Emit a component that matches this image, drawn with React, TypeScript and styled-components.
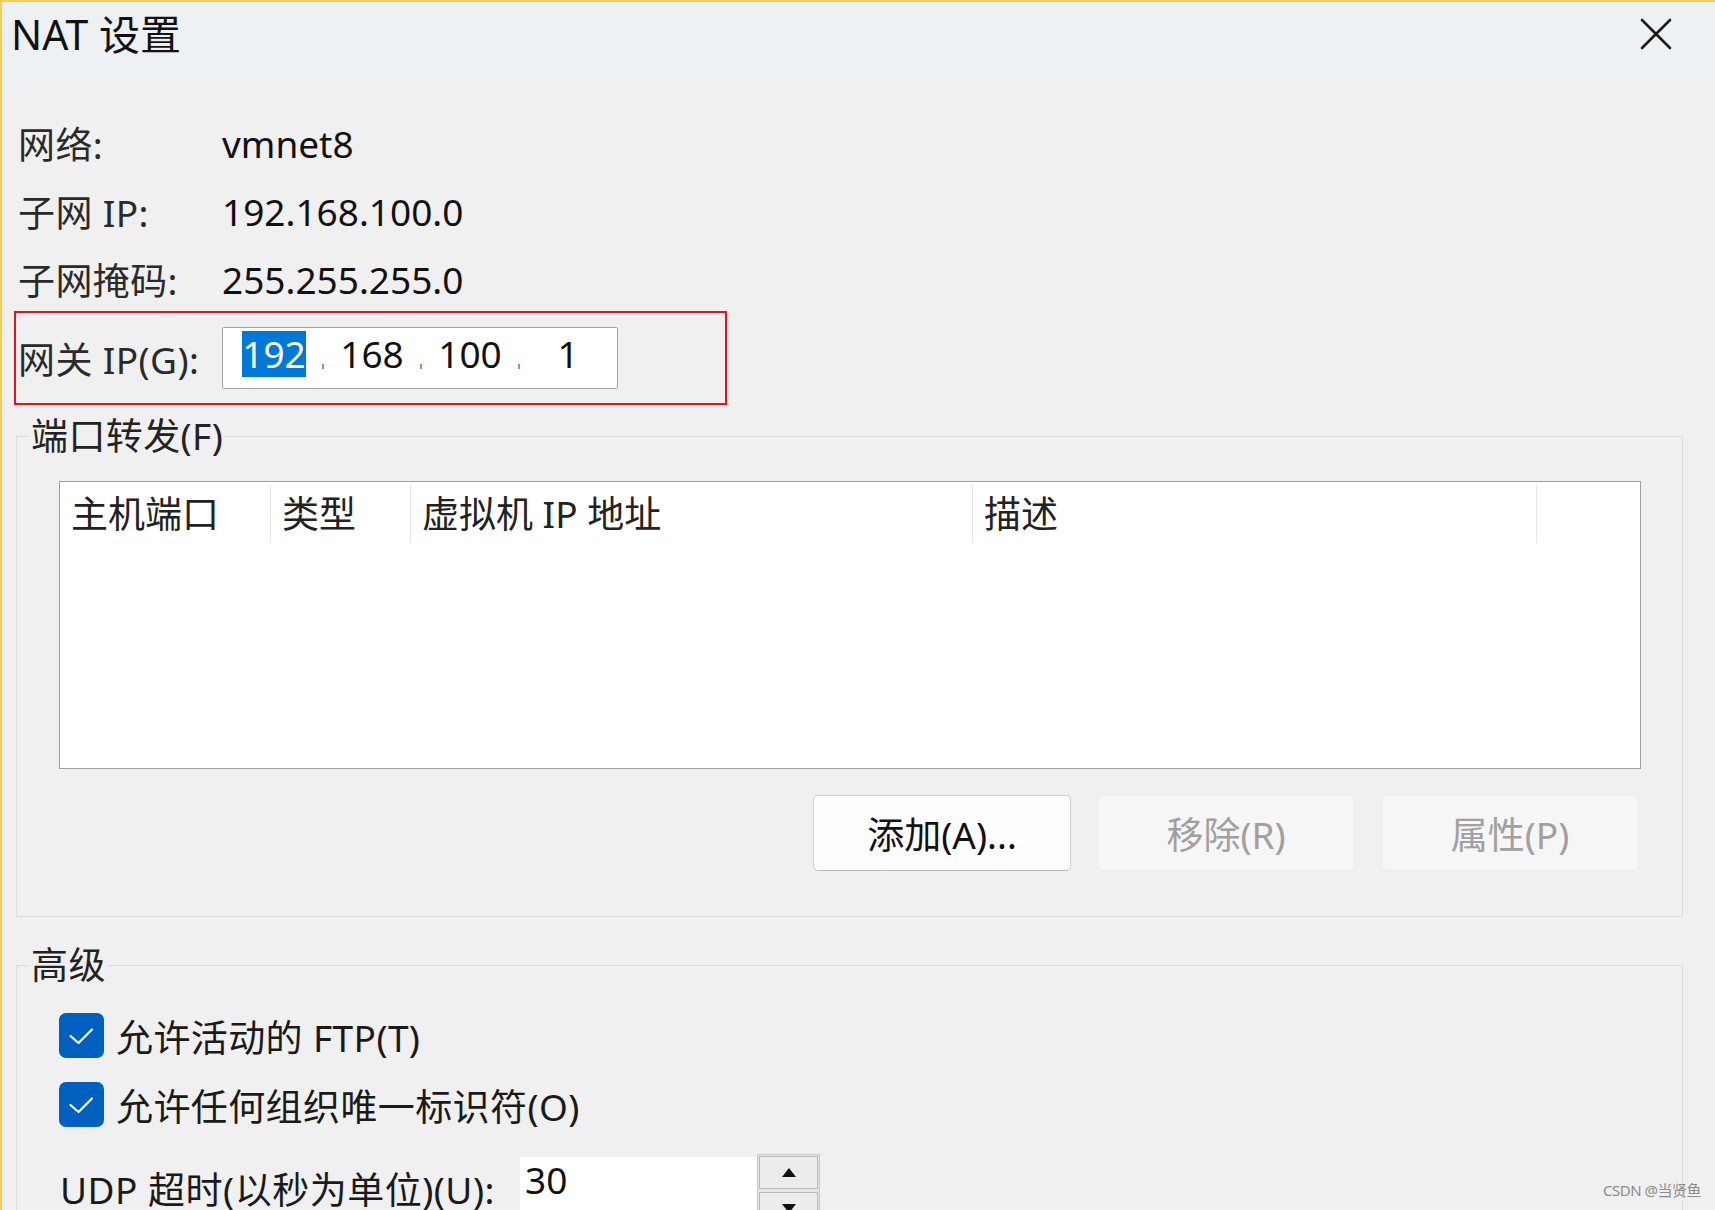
import React from "react";
import styled, { createGlobalStyle } from "styled-components";

const Global = createGlobalStyle`
  html, body { margin: 0; padding: 0; background: #f0f0f0; }
  body { font-family: "Noto Sans", "Noto Sans CJK SC", sans-serif; color: #1a1a1a; }
  * { box-sizing: border-box; }
`;

const Dialog = styled.div`
  position: relative;
  width: 1715px;
  height: 1210px;
  overflow: hidden;
  background: #f0f0f0;
  border-top: 2px solid #f8cd55;
  border-left: 2px solid #f8cd55;
`;

const TitleBar = styled.div`
  height: 83px;
  display: flex;
  align-items: flex-start;
  justify-content: space-between;
  padding: 9px 43px 0 9px;
  background: #eef1f3;
`;

const Title = styled.div`
  font-size: 41px;
  line-height: 46px;
  color: #111;
`;

const CloseBtn = styled.div`
  margin-top: 7px;
  width: 32px;
  height: 32px;
  display: flex;
`;

const Body = styled.div`
  padding: 24px 0 0 16px;
  font-size: 37px;
`;

const InfoRow = styled.div`
  display: grid;
  grid-template-columns: 204px auto;
  align-items: center;
  height: 68px;
`;

const Label = styled.div`
  color: #2a2a2a;
  letter-spacing: 0.4px;
`;

const Value = styled.div`
  color: #111;
`;

const Highlight = styled.div`
  margin: -2px 0 0 -4px;
  width: 713px;
  height: 94px;
  border: 2px solid #e8101a;
  padding-left: 2px;
  display: grid;
  grid-template-columns: 204px auto;
  align-items: center;
`;

const IpBox = styled.div`
  width: 396px;
  height: 62px;
  border: 1px solid #a5a5a5;
  border-radius: 2px;
  background: #fff;
  display: flex;
  align-items: flex-start;
  padding: 3px 0 0 12px;
`;

const Octet = styled.div`
  width: 78px;
  text-align: center;
  line-height: 46px;
  color: #111;
`;

const Selected = styled.span`
  display: inline-block;
  background: #0078d7;
  color: #fff;
  line-height: 46px;
`;

const Dot = styled.span`
  width: 2px;
  height: 5px;
  margin: 33px 9px 0;
  background: #c98c4e;
`;

const Group = styled.fieldset<{ $gap: number }>`
  margin: ${(p) => p.$gap}px 0 0 -2px;
  width: 1667px;
  border: 1px solid #dcdcdc;
  padding: 0;
  min-width: 0;
`;

const Legend = styled.legend`
  margin-left: 12px;
  padding: 0 2px;
  font-size: 37px;
  line-height: 50px;
  color: #222;
  letter-spacing: 0.4px;
`;

const GroupInner = styled.div`
  padding: 20px 41px 45px 42px;
`;

const ListView = styled.div`
  width: 1582px;
  height: 288px;
  border: 1px solid #a0a0a0;
  background: #fff;
`;

const ListHeader = styled.div`
  display: grid;
  grid-template-columns: 211px 140px 562px 564px 1fr;
  padding-top: 3px;
`;

const HeaderCell = styled.div<{ $last?: boolean }>`
  height: 58px;
  line-height: 58px;
  padding-left: 11px;
  border-right: ${(p) => (p.$last ? "none" : "1px solid #e6e6e6")};
  color: #222;
  white-space: nowrap;
`;

const ButtonRow = styled.div`
  display: flex;
  justify-content: flex-end;
  gap: 26px;
  margin: 26px 2px 0 0;
`;

const Button = styled.div<{ $disabled?: boolean }>`
  width: 258px;
  height: 76px;
  display: flex;
  align-items: center;
  justify-content: center;
  border-radius: 5px;
  font-size: 37px;
  background: ${(p) => (p.$disabled ? "#f6f6f6" : "#fdfdfd")};
  border: 1px solid ${(p) => (p.$disabled ? "#ececec" : "#d2d2d2")};
  border-bottom-color: ${(p) => (p.$disabled ? "#ececec" : "#bdbdbd")};
  color: ${(p) => (p.$disabled ? "#a0a0a0" : "#111")};
`;

const AdvInner = styled.div`
  padding: 11px 0 80px 0;
`;

const CheckRow = styled.div`
  display: flex;
  align-items: center;
  gap: 12px;
  height: 69px;
  padding-left: 42px;
  letter-spacing: 0.4px;
`;

const CheckBox = styled.div`
  width: 45px;
  height: 45px;
  border-radius: 7px;
  background: #0060c0;
  display: flex;
  align-items: center;
  justify-content: center;
`;

const UdpRow = styled.div`
  display: flex;
  align-items: flex-start;
  margin-top: 18px;
  padding-left: 43px;
`;

const UdpLabel = styled.div`
  width: 460px;
  margin-top: 8px;
  line-height: 50px;
  white-space: nowrap;
  letter-spacing: 0.5px;
`;

const NumInput = styled.div`
  width: 237px;
  height: 62px;
  background: #fff;
  padding-left: 5px;
  line-height: 46px;
  color: #111;
`;

const Spinner = styled.div`
  margin-top: -3px;
  width: 63px;
  padding: 1px;
  border: 1px solid #c9c9c9;
  display: flex;
  flex-direction: column;
  gap: 3px;
  background: #e4e4e4;
`;

const SpinBtn = styled.div`
  height: 33px;
  border: 1px solid #b9b9b9;
  background: #ececec;
  display: flex;
  align-items: center;
  justify-content: center;
`;

const Watermark = styled.div`
  position: absolute;
  right: 14px;
  bottom: 10px;
  font-size: 15px;
  color: #8c8c8c;
  letter-spacing: -0.5px;
`;

const Check = () => (
  <svg width="45" height="45" viewBox="0 0 45 45">
    <path d="M11.5 23 L19.5 30 L33 16.5" fill="none" stroke="#fff" strokeWidth="2.2" strokeLinecap="round" strokeLinejoin="round" />
  </svg>
);

export default function App() {
  return (
    <>
      <Global />
      <Dialog>
        <TitleBar>
          <Title>NAT 设置</Title>
          <CloseBtn>
            <svg width="32" height="32" viewBox="0 0 32 32">
              <path d="M2 2 L30 30 M30 2 L2 30" stroke="#1a1a1a" strokeWidth="2.6" strokeLinecap="round" />
            </svg>
          </CloseBtn>
        </TitleBar>
        <Body>
          <InfoRow>
            <Label>网络:</Label>
            <Value>vmnet8</Value>
          </InfoRow>
          <InfoRow>
            <Label>子网 IP:</Label>
            <Value>192.168.100.0</Value>
          </InfoRow>
          <InfoRow>
            <Label>子网掩码:</Label>
            <Value>255.255.255.0</Value>
          </InfoRow>
          <Highlight>
            <Label>网关 IP(G):</Label>
            <IpBox>
              <Octet>
                <Selected>192</Selected>
              </Octet>
              <Dot />
              <Octet>168</Octet>
              <Dot />
              <Octet>100</Octet>
              <Dot />
              <Octet>1</Octet>
            </IpBox>
          </Highlight>

          <Group $gap={6}>
            <Legend>端口转发(F)</Legend>
            <GroupInner>
              <ListView>
                <ListHeader>
                  <HeaderCell>主机端口</HeaderCell>
                  <HeaderCell>类型</HeaderCell>
                  <HeaderCell>虚拟机 IP 地址</HeaderCell>
                  <HeaderCell>描述</HeaderCell>
                  <HeaderCell $last />
                </ListHeader>
              </ListView>
              <ButtonRow>
                <Button>添加(A)...</Button>
                <Button $disabled>移除(R)</Button>
                <Button $disabled>属性(P)</Button>
              </ButtonRow>
            </GroupInner>
          </Group>

          <Group $gap={23}>
            <Legend>高级</Legend>
            <AdvInner>
              <CheckRow>
                <CheckBox>
                  <Check />
                </CheckBox>
                <span>允许活动的 FTP(T)</span>
              </CheckRow>
              <CheckRow>
                <CheckBox>
                  <Check />
                </CheckBox>
                <span>允许任何组织唯一标识符(O)</span>
              </CheckRow>
              <UdpRow>
                <UdpLabel>UDP 超时(以秒为单位)(U):</UdpLabel>
                <NumInput>30</NumInput>
                <Spinner>
                  <SpinBtn>
                    <svg width="14" height="9" viewBox="0 0 14 9">
                      <path d="M7 0 L14 9 L0 9 Z" fill="#111" />
                    </svg>
                  </SpinBtn>
                  <SpinBtn>
                    <svg width="14" height="9" viewBox="0 0 14 9">
                      <path d="M0 0 L14 0 L7 9 Z" fill="#111" />
                    </svg>
                  </SpinBtn>
                </Spinner>
              </UdpRow>
            </AdvInner>
          </Group>
        </Body>
        <Watermark>CSDN @当贤鱼</Watermark>
      </Dialog>
    </>
  );
}
